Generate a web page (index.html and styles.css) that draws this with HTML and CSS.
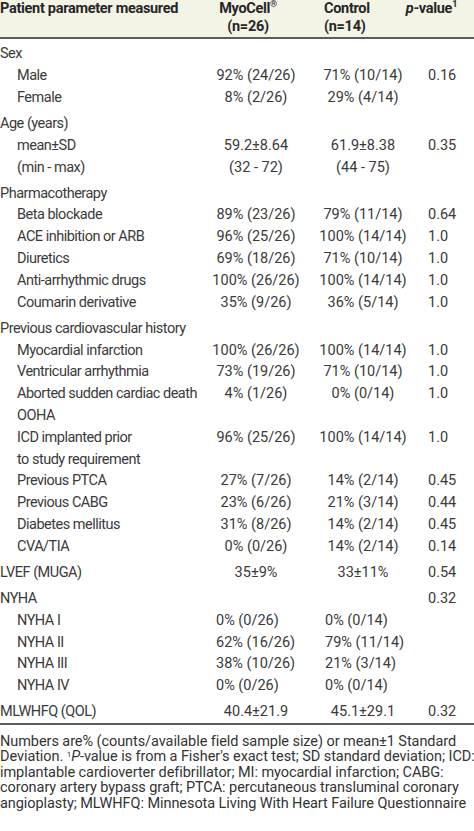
FILE: index.html
```html
<!DOCTYPE html>
<html lang="en">
<head>
<meta charset="utf-8">
<title>Patient parameters</title>
<link rel="stylesheet" href="styles.css">
</head>
<body>
<div class="tbl">
  <div class="head">
    <div class="c1">Patient parameter measured</div>
    <div class="c2">MyoCell<sup class="reg">®</sup><br>(n=26)</div>
    <div class="c3">Control<br>(n=14)</div>
    <div class="c4"><i>p</i>-value<sup class="one">1</sup></div>
  </div>

  <div class="group first">
    <div class="row"><div class="lab">Sex</div></div>
    <div class="row"><div class="lab sub">Male</div><div class="v2">92% (24/26)</div><div class="v3">71% (10/14)</div><div class="v4">0.16</div></div>
    <div class="row"><div class="lab sub">Female</div><div class="v2">8% (2/26)</div><div class="v3">29% (4/14)</div><div class="v4"></div></div>
  </div>

  <div class="group">
    <div class="row"><div class="lab">Age (years)</div></div>
    <div class="row"><div class="lab sub">mean±SD</div><div class="v2">59.2±8.64</div><div class="v3">61.9±8.38</div><div class="v4">0.35</div></div>
    <div class="row"><div class="lab sub">(min - max)</div><div class="v2">(32 - 72)</div><div class="v3">(44 - 75)</div><div class="v4"></div></div>
  </div>

  <div class="group">
    <div class="row"><div class="lab">Pharmacotherapy</div></div>
    <div class="row"><div class="lab sub">Beta blockade</div><div class="v2">89% (23/26)</div><div class="v3">79% (11/14)</div><div class="v4">0.64</div></div>
    <div class="row"><div class="lab sub">ACE inhibition or ARB</div><div class="v2">96% (25/26)</div><div class="v3">100% (14/14)</div><div class="v4">1.0</div></div>
    <div class="row"><div class="lab sub">Diuretics</div><div class="v2">69% (18/26)</div><div class="v3">71% (10/14)</div><div class="v4">1.0</div></div>
    <div class="row"><div class="lab sub">Anti-arrhythmic drugs</div><div class="v2">100% (26/26)</div><div class="v3">100% (14/14)</div><div class="v4">1.0</div></div>
    <div class="row"><div class="lab sub">Coumarin derivative</div><div class="v2">35% (9/26)</div><div class="v3">36% (5/14)</div><div class="v4">1.0</div></div>
  </div>

  <div class="group">
    <div class="row"><div class="lab">Previous cardiovascular history</div></div>
    <div class="row"><div class="lab sub">Myocardial infarction</div><div class="v2">100% (26/26)</div><div class="v3">100% (14/14)</div><div class="v4">1.0</div></div>
    <div class="row"><div class="lab sub">Ventricular arrhythmia</div><div class="v2">73% (19/26)</div><div class="v3">71% (10/14)</div><div class="v4">1.0</div></div>
    <div class="row"><div class="lab sub">Aborted sudden cardiac death</div><div class="v2">4% (1/26)</div><div class="v3">0% (0/14)</div><div class="v4">1.0</div></div>
    <div class="row"><div class="lab sub">OOHA</div></div>
    <div class="row"><div class="lab sub">ICD implanted prior</div><div class="v2">96% (25/26)</div><div class="v3">100% (14/14)</div><div class="v4">1.0</div></div>
    <div class="row"><div class="lab sub">to study requirement</div></div>
    <div class="row"><div class="lab sub">Previous PTCA</div><div class="v2">27% (7/26)</div><div class="v3">14% (2/14)</div><div class="v4">0.45</div></div>
    <div class="row"><div class="lab sub">Previous CABG</div><div class="v2">23% (6/26)</div><div class="v3">21% (3/14)</div><div class="v4">0.44</div></div>
    <div class="row"><div class="lab sub">Diabetes mellitus</div><div class="v2">31% (8/26)</div><div class="v3">14% (2/14)</div><div class="v4">0.45</div></div>
    <div class="row"><div class="lab sub">CVA/TIA</div><div class="v2">0% (0/26)</div><div class="v3">14% (2/14)</div><div class="v4">0.14</div></div>
  </div>

  <div class="group">
    <div class="row"><div class="lab">LVEF (MUGA)</div><div class="v2">35±9%</div><div class="v3">33±11%</div><div class="v4">0.54</div></div>
  </div>

  <div class="group">
    <div class="row"><div class="lab">NYHA</div><div class="v2"></div><div class="v3"></div><div class="v4">0.32</div></div>
    <div class="row left"><div class="lab sub">NYHA I</div><div class="v2">0% (0/26)</div><div class="v3">0% (0/14)</div><div class="v4"></div></div>
    <div class="row left"><div class="lab sub">NYHA II</div><div class="v2">62% (16/26)</div><div class="v3">79% (11/14)</div><div class="v4"></div></div>
    <div class="row left"><div class="lab sub">NYHA III</div><div class="v2">38% (10/26)</div><div class="v3">21% (3/14)</div><div class="v4"></div></div>
    <div class="row left"><div class="lab sub">NYHA IV</div><div class="v2">0% (0/26)</div><div class="v3">0% (0/14)</div><div class="v4"></div></div>
  </div>

  <div class="group last">
    <div class="row"><div class="lab">MLWHFQ (QOL)</div><div class="v2">40.4±21.9</div><div class="v3">45.1±29.1</div><div class="v4">0.32</div></div>
  </div>
</div>

<div class="note">
  <span>Numbers are% (counts/available field sample size) or mean±1 Standard</span>
  <span>Deviation. <sup class="fn">1</sup><i>P</i>-value is from a Fisher's exact test; SD standard deviation; ICD:</span>
  <span>implantable cardioverter defibrillator; MI: myocardial infarction; CABG:</span>
  <span>coronary artery bypass graft; PTCA: percutaneous transluminal coronary</span>
  <span>angioplasty; MLWHFQ: Minnesota Living With Heart Failure Questionnaire</span>
</div>
</body>
</html>
```

FILE: styles.css
```css
* { box-sizing: border-box; }

body {
  margin: 0;
  background: #ffffff;
  color: #3a3a3a;
  font-family: Roboto, "Liberation Sans", sans-serif;
  font-size: 14.5px;
  letter-spacing: -0.5px;
}

.tbl {
  width: 474px;
}

.head {
  display: grid;
  grid-template-columns: 205px 102px 90px 77px;
  height: 39px;
  background: #f3f3e6;
  border-bottom: 2px solid #5c5c5c;
  font-size: 14.5px;
  letter-spacing: -0.3px;
  line-height: 18px;
  font-weight: bold;
  color: #262626;
  white-space: nowrap;
}

.head .c1 { padding-left: 0; }
.head .c2 { text-align: center; padding-right: 16px; }
.head .c3 { padding-left: 17px; }
.head .c4 { text-align: right; padding-right: 17px; }

.reg {
  font-size: 9px;
  font-weight: normal;
  vertical-align: 6px;
  line-height: 0;
}

.one {
  font-size: 9px;
  vertical-align: 6px;
  line-height: 0;
}

.fn {
  font-size: 8px;
  vertical-align: 4px;
  line-height: 0;
}

.group {
  padding-top: 4.3px;
}

.group.last {
  border-bottom: 2px solid #5c5c5c;
}

.row {
  display: grid;
  grid-template-columns: 205px 102px 112px 55px;
  height: 21.8px;
  line-height: 21.8px;
  white-space: nowrap;
}

.lab.sub { padding-left: 17px; }

.v2, .v3, .v4 { letter-spacing: 0; }
.v2, .v3 { text-align: center; }
.v4 { padding-left: 9px; }

.row.left .v2 { text-align: left; padding-left: 11px; }
.row.left .v3 { text-align: left; padding-left: 18px; }

.note {
  padding-top: 9px;
  font-size: 14.5px;
  letter-spacing: -0.07px;
  line-height: 15.4px;
  white-space: nowrap;
  color: #333333;
}

.note span { display: block; }
```
